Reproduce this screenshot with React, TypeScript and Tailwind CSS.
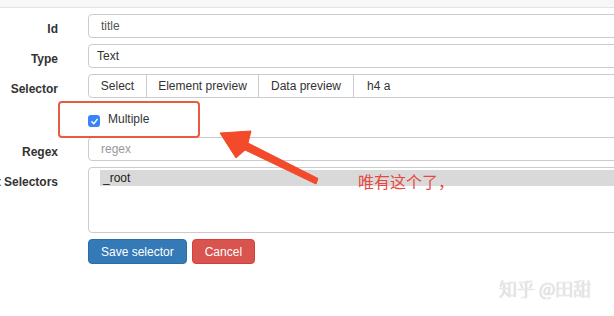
const font = { fontFamily: '"Liberation Sans", Arial, sans-serif' };

function Label({ text }: { text: string }) {
  return (
    <div className="relative top-[3px] flex h-[24px] w-[58px] shrink-0 justify-end whitespace-nowrap text-[12px] font-bold leading-[24px] text-[#333]">
      {text}
    </div>
  );
}

function Row({ label, children, className = "" }: { label: string; children: React.ReactNode; className?: string }) {
  return (
    <div className={`flex items-start gap-[30px] ${className}`}>
      <Label text={label} />
      <div className="flex-1">{children}</div>
    </div>
  );
}

export default function App() {
  return (
    <div className="relative h-[316px] w-[614px] overflow-hidden bg-white" style={font}>
      <div className="h-[8px] border-b border-[#e3e3e3] bg-[#f7f7f7]" />

      <div className="w-[720px]">
        <Row label="Id" className="mt-[6px]">
          <div className="h-[24px] rounded-[4px] border border-[#ccc] pl-[12px] text-[12px] leading-[22px] text-[#555]">
            title
          </div>
        </Row>

        <Row label="Type" className="mt-[6px]">
          <div className="h-[24px] rounded-[4px] border border-[#ccc] pl-[8px] text-[12px] leading-[22px] text-[#333]">
            Text
          </div>
        </Row>

        <Row label="Selector" className="mt-[6px]">
          <div className="flex h-[24px] text-[12px] leading-[22px] text-[#333]">
            <div className="w-[59px] rounded-l-[4px] border border-[#ccc] text-center">Select</div>
            <div className="-ml-px w-[113px] border border-[#ccc] text-center">Element preview</div>
            <div className="-ml-px w-[96px] border border-[#ccc] text-center">Data preview</div>
            <div className="-ml-px flex-1 rounded-r-[4px] border border-[#ccc] pl-[13px]">h4 a</div>
          </div>
        </Row>

        <div className="flex h-[39px] items-center gap-[8px] pl-[88px] pt-[7px]">
          <div className="flex h-[12px] w-[12px] items-center justify-center rounded-[3px] bg-[#3a82f7]">
            <svg width="9" height="9" viewBox="0 0 10 10">
              <path d="M2 5.3 L4.2 7.5 L8 2.6" fill="none" stroke="white" strokeWidth="1.6" strokeLinecap="round" strokeLinejoin="round" />
            </svg>
          </div>
          <span className="-mt-[4px] text-[12px] text-[#333]">Multiple</span>
        </div>

        <Row label="Regex">
          <div className="h-[24px] rounded-[4px] border border-[#ccc] pl-[12px] text-[12px] leading-[22px] text-[#999]">
            regex
          </div>
        </Row>

        <Row label="Parent Selectors" className="mt-[6px]">
          <div className="h-[66px] rounded-[4px] border border-[#ccc] pl-[11px] pt-[2px]">
            <div className="h-[16px] bg-[#d9d9d9] pl-[3px] text-[12px] leading-[16px] text-[#222]">_root</div>
          </div>
        </Row>

        <div className="mt-[6px] flex gap-[5px] pl-[88px]">
          <button className="h-[25px] rounded-[4px] border border-[#2e6da4] bg-[#337ab7] px-[12px] text-[12px] text-white">
            Save selector
          </button>
          <button className="h-[25px] rounded-[4px] border border-[#d43f3a] bg-[#d9534f] px-[12px] text-[12px] text-white">
            Cancel
          </button>
        </div>
      </div>

      {/* annotation overlay */}
      <div className="absolute left-[58px] top-[101px] h-[37px] w-[142px] rounded-[4px] border-2 border-[#ea5a3f]" />
      <svg className="absolute left-0 top-0" width="614" height="316">
        <polygon
          points="220,133 251,131 248,143 318,178.5 316,184 245,150 236,158"
          fill="#f24a2b"
          stroke="#f24a2b"
          strokeWidth="1"
          strokeLinejoin="round"
        />
      </svg>
      <div
        className="absolute left-[358px] top-[171px] text-[16px] leading-[20px] text-[#e8483f]"
        style={{ fontFamily: '"Noto Sans CJK SC", sans-serif' }}
      >
        唯有这个了，
      </div>
      <div
        className="absolute left-[499px] top-[277px] text-[18px] font-light leading-[22px] text-[#f0f0f0] [text-shadow:0_0_1px_#9a9a9a]"
        style={{ fontFamily: '"Noto Sans CJK SC", sans-serif' }}
      >
        知乎 @田甜
      </div>
    </div>
  );
}
